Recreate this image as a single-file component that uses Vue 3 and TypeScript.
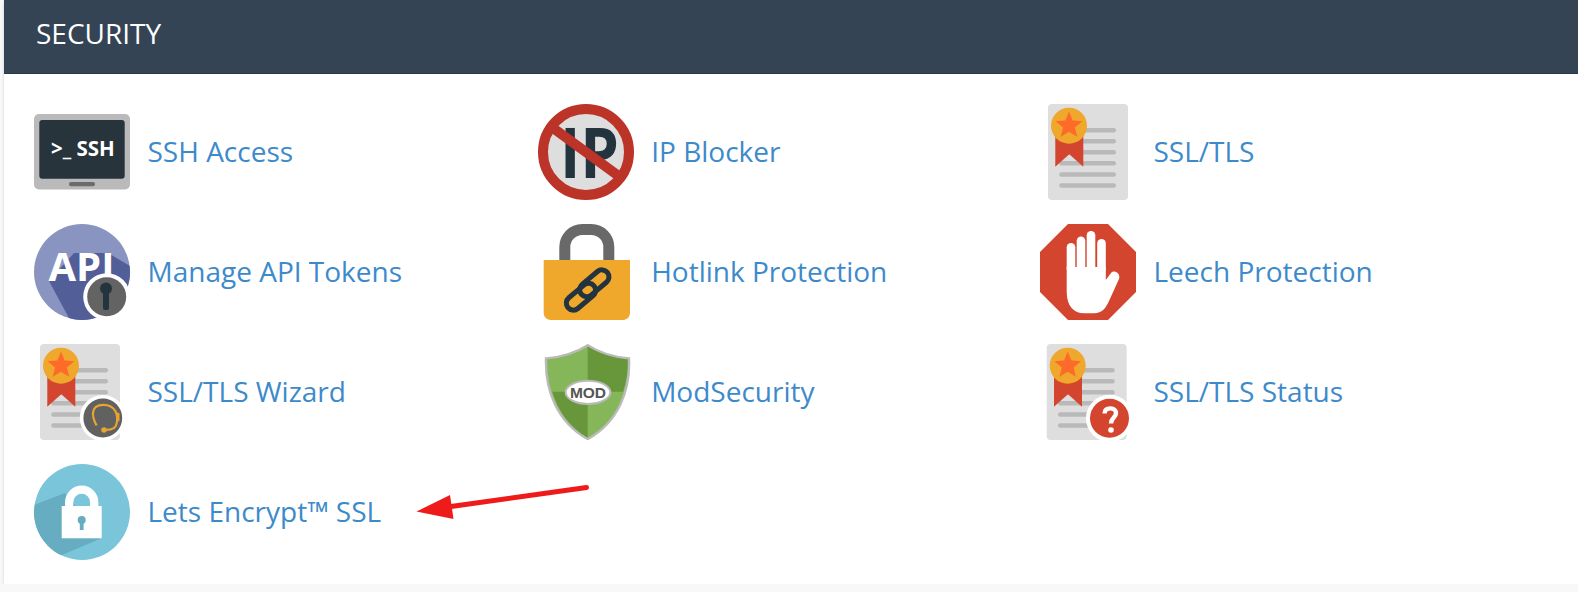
<script setup lang="ts">
interface Tool { label: string; icon: string }

const tools: Tool[] = [
  { label: 'SSH Access', icon: 'ssh' },
  { label: 'IP Blocker', icon: 'ip' },
  { label: 'SSL/TLS', icon: 'ssl' },
  { label: 'Manage API Tokens', icon: 'api' },
  { label: 'Hotlink Protection', icon: 'hotlink' },
  { label: 'Leech Protection', icon: 'leech' },
  { label: 'SSL/TLS Wizard', icon: 'wizard' },
  { label: 'ModSecurity', icon: 'mod' },
  { label: 'SSL/TLS Status', icon: 'status' },
  { label: 'Lets Encrypt™ SSL', icon: 'lets' },
]

function star(cx: number, cy: number, R: number, r: number): string {
  const pts: string[] = []
  for (let i = 0; i < 10; i++) {
    const a = -Math.PI / 2 + (i * Math.PI) / 5
    const d = i % 2 === 0 ? R : r
    pts.push(`${(cx + d * Math.cos(a)).toFixed(2)},${(cy + d * Math.sin(a)).toFixed(2)}`)
  }
  return pts.join(' ')
}
const starPts = star(29, 21.5, 14, 6.2)
const lines = [24, 35, 46, 57, 68.3, 79.3]
const certShift: Record<string, number> = { ssl: 0, wizard: -2, status: -1.3 }
</script>

<template>
  <section class="panel">
    <header class="head">SECURITY</header>
    <div class="grid">
      <a v-for="t in tools" :key="t.label" class="tool">
        <svg class="icon" viewBox="0 0 96 96" width="96" height="96" aria-hidden="true">
          <template v-if="t.icon === 'ssh'">
            <rect x="0" y="10" width="96" height="75.5" rx="5" fill="#bababa" />
            <rect x="5.3" y="16" width="85.4" height="58.7" rx="3" fill="#27343c" />
            <rect x="35" y="78" width="26" height="4.2" rx="2" fill="#6b6b6b" />
            <text x="17" y="52" class="ssh">&gt;_ SSH</text>
          </template>

          <template v-else-if="t.icon === 'ip'">
            <circle cx="48" cy="48" r="43" fill="#dedede" stroke="#bc3328" stroke-width="10" />
            <text x="22" y="73.6" textLength="59" lengthAdjust="spacingAndGlyphs" class="ipt">IP</text>
            <line x1="15" y1="24" x2="82" y2="73" stroke="#bc3328" stroke-width="10" />
          </template>

          <template v-else-if="t.icon === 'api'">
            <clipPath id="apiClip"><circle cx="48" cy="48" r="48" /></clipPath>
            <circle cx="48" cy="48" r="48" fill="#8a94c0" />
            <polygon clip-path="url(#apiClip)" points="15,57 36,96 96,96 96,42 74,29 40,29" fill="#515e98" />
            <text x="14.5" y="56.8" class="apit">API</text>
            <circle cx="72.7" cy="72.7" r="23.5" fill="#fff" />
            <circle cx="72.7" cy="72.7" r="19.5" fill="#636363" />
            <circle cx="72" cy="64.5" r="6" fill="#24343f" />
            <rect x="69" y="66" width="6" height="20" rx="2" fill="#24343f" />
          </template>

          <template v-else-if="t.icon === 'hotlink'">
            <path d="M26.8 38V23A17.5 17.5 0 0 1 44.3 5.5H53.3A17.5 17.5 0 0 1 70.8 23V38" fill="none" stroke="#696969" stroke-width="11" />
            <path d="M5.7 36H92V89A7 7 0 0 1 85 96H12.7A7 7 0 0 1 5.7 89Z" fill="#efa72c" />
            <g fill="none" stroke="#24343f" stroke-width="5">
              <rect x="26" y="65.7" width="34" height="14" rx="7" transform="rotate(-40 43 72.7)" />
              <rect x="39.3" y="52.3" width="34" height="14" rx="7" transform="rotate(-40 56.3 59.3)" />
            </g>
          </template>

          <template v-else-if="t.icon === 'leech'">
            <polygon points="28,0 68,0 96,28 96,68 68,96 28,96 0,68 0,28" fill="#d44530" />
            <g fill="#fff">
              <rect x="26.7" y="19" width="8.6" height="30" rx="4.3" />
              <rect x="36.7" y="12.5" width="8.6" height="36" rx="4.3" />
              <rect x="46.7" y="7" width="8.6" height="42" rx="4.3" />
              <rect x="57.2" y="15" width="8.6" height="34" rx="4.3" />
              <path d="M26.7 43H65.8V56L71 49C75 45 81 50 79 55L69 77C66 84 62 89.3 54 89.3H44C34 89.3 26.7 82 26.7 68Z" />
            </g>
          </template>

          <template v-else-if="t.icon === 'mod'">
            <path d="M49.7 1.2C38 8.5 24 13.2 8 14.4 7 46 19 78 49.7 95 80.5 78 92.5 46 91 14.4 75 13.2 61 8.5 49.7 1.2Z" fill="#85b75a" stroke="#bababa" stroke-width="2.4" />
            <path d="M49.7 2.6C61 9.6 74 14 89.7 15.5 90 27 88.4 37.6 85 47.7H49.7Z" fill="#68963a" />
            <path d="M49.7 47.7V93.6C32 83.6 20.4 68 14.4 47.7Z" fill="#68963a" />
            <ellipse cx="50" cy="48.3" rx="22.4" ry="11.6" fill="#fff" stroke="#bababa" stroke-width="2" />
            <text x="50" y="54" class="modt">MOD</text>
          </template>

          <template v-else-if="t.icon === 'lets'">
            <clipPath id="letsClip"><circle cx="48" cy="48" r="48" /></clipPath>
            <circle cx="48" cy="48" r="48" fill="#7ac5d9" />
            <polygon clip-path="url(#letsClip)" points="0,41 31,29 68,74 28,91 0,96" fill="#66adc1" />
            <path d="M35.2 44V38.2A12.5 12.5 0 0 1 60.2 38.2V44" fill="none" stroke="#fff" stroke-width="8.3" />
            <rect x="27.7" y="42" width="40" height="32.3" fill="#fff" />
            <circle cx="47.7" cy="56" r="4" fill="#66adc1" />
            <rect x="45.8" y="57" width="3.8" height="9" fill="#66adc1" />
          </template>

          <template v-else>
            <g :transform="`translate(${certShift[t.icon]} 0)`">
              <rect x="8" y="0" width="80" height="96" rx="4" fill="#dedede" />
              <rect v-for="y in lines" :key="y" x="19.3" :y="y" width="56.7" height="4.4" rx="2.2" fill="#b9b9b9" />
              <polygon points="15.3,30 43.3,30 43.3,62.7 29.3,50.3 15.3,62.7" fill="#d44530" />
              <circle cx="29" cy="21.7" r="18" fill="#efa72c" />
              <polygon :points="starPts" fill="#fd6a2a" />
            </g>
            <template v-if="t.icon === 'wizard'">
              <circle cx="68.8" cy="74" r="23" fill="#fff" />
              <circle cx="68.8" cy="74" r="19.4" fill="#616161" />
              <path d="M62.6 81.5C57 71 57 61.3 69 60.8 81.5 60.5 84.6 71 82.6 79.6 81.6 85.4 76 86 71 85.8" fill="none" stroke="#e9a32f" stroke-width="2.2" />
              <path d="M84 70V76" stroke="#e9a32f" stroke-width="3" stroke-linecap="round" />
              <circle cx="70" cy="86" r="2.8" fill="#e9a32f" />
            </template>
            <template v-if="t.icon === 'status'">
              <circle cx="69.5" cy="74.3" r="23.5" fill="#fff" />
              <circle cx="69.5" cy="74.3" r="19.5" fill="#d44530" />
              <path d="M64.6 69.5C64.6 65.5 67.5 64.4 70.5 64.4 74 64.4 76 66.4 76 69.3 76 73.4 71 74 71 79.5" fill="none" stroke="#fff" stroke-width="4.4" />
              <circle cx="71" cy="86" r="2.8" fill="#fff" />
            </template>
          </template>
        </svg>
        <span class="label">{{ t.label }}</span>
      </a>
    </div>
    <svg class="arrow" viewBox="0 0 180 40" width="180" height="40" aria-hidden="true">
      <line x1="170.5" y1="7.5" x2="35" y2="26.5" stroke="#ef1a1a" stroke-width="5" stroke-linecap="round" />
      <polygon points="0.5,31.5 34,15 37.5,39" fill="#ef1a1a" />
    </svg>
  </section>
</template>

<style scoped>
.panel {
  position: relative;
  margin-left: 4px;
  height: 584px;
  background: #fff;
  box-shadow: 0 1px 3px rgba(0, 0, 0, 0.16);
  font-family: "Open Sans", "Liberation Sans", sans-serif;
}
.head {
  box-sizing: border-box;
  height: 74px;
  padding: 14px 0 0 32px;
  background: #344454;
  border-bottom: 1px solid #2a3846;
  color: #fff;
  font-size: 28px;
  line-height: 38px;
}
.grid {
  display: grid;
  grid-template-columns: 503.7px 502.3px 503px;
  grid-auto-rows: 96px;
  row-gap: 24px;
  padding: 30px 0 0 30px;
}
.tool {
  display: flex;
  align-items: center;
  gap: 17.5px;
}
.icon {
  flex: none;
  display: block;
}
.label {
  color: #3d8acb;
  font-size: 28px;
  line-height: 38px;
  margin-bottom: 2px;
}
.arrow {
  position: absolute;
  left: 412px;
  top: 480px;
}
.ssh {
  font: 700 20.5px "Open Sans", sans-serif;
  fill: #fff;
}
.ipt {
  font: 700 70px "Open Sans", sans-serif;
  fill: #24343f;
}
.apit {
  font: 700 40px "Open Sans", sans-serif;
  fill: #fff;
}
.modt {
  font: 700 15.5px "Liberation Sans", sans-serif;
  fill: #555;
  text-anchor: middle;
}
</style>

<style>
html, body {
  margin: 0;
  background: #f8f8f8;
}
</style>
